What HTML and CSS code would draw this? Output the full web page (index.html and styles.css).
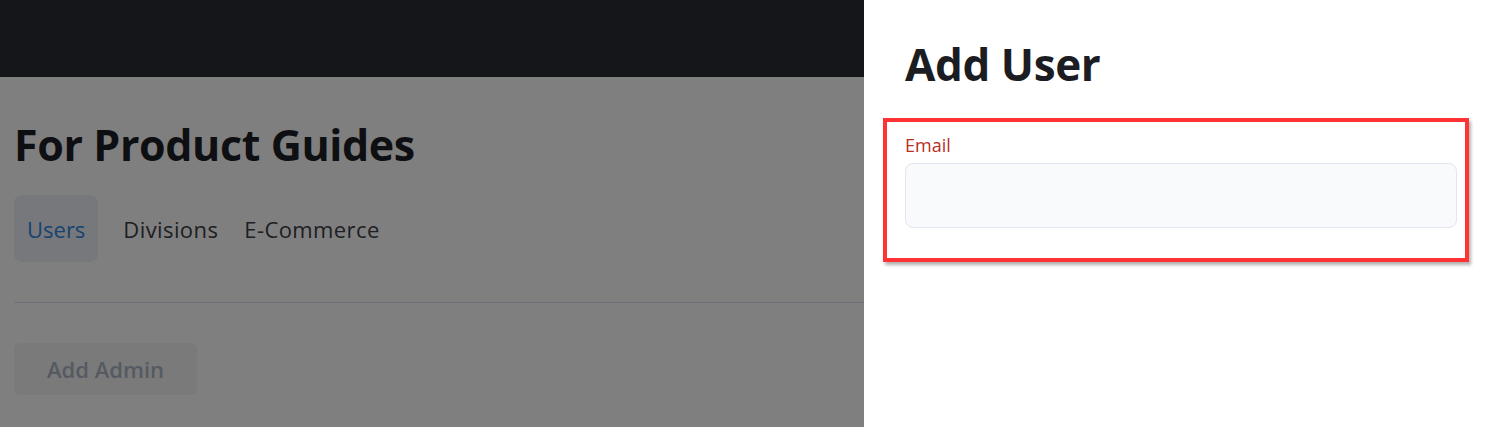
FILE: index.html
```html
<!DOCTYPE html>
<html lang="en">
<head>
<meta charset="utf-8">
<title>Add User</title>
<link rel="stylesheet" href="styles.css">
</head>
<body>
<div class="app">
  <header class="topbar"></header>
  <main class="content">
    <h1 class="page-title">For Product Guides</h1>
    <nav class="tabs">
      <a class="tab tab-active">Users</a>
      <a class="tab">Divisions</a>
      <a class="tab">E-Commerce</a>
    </nav>
    <div class="actions">
      <button class="btn-disabled" disabled>Add Admin</button>
    </div>
  </main>
</div>
<div class="backdrop"></div>
<aside class="drawer">
  <h2 class="drawer-title">Add User</h2>
  <div class="highlight">
    <label class="field-label" for="email">Email</label>
    <input class="field-input" id="email" type="email">
  </div>
</aside>
</body>
</html>
```
FILE: styles.css
```css
* { box-sizing: border-box; }
html, body {
  margin: 0;
  height: 100%;
  overflow: hidden;
  background: #ffffff;
  font-family: "Open Sans", "Noto Sans", "Liberation Sans", sans-serif;
}
.app { min-height: 100%; }
.topbar {
  height: 77px;
  background: #2a2c34;
}
.content {
  padding: 0 0 0 14px;
}
.page-title {
  margin: 0;
  padding-top: 40px;
  font-size: 43px;
  line-height: 56px;
  font-weight: 700;
  color: #1c1e24;
  letter-spacing: -0.4px;
}
.tabs {
  display: flex;
  align-items: center;
  gap: 0;
  margin-top: 22px;
  padding-bottom: 40px;
  border-bottom: 1px solid #dde0ee;
}
.tab {
  display: flex;
  align-items: center;
  height: 67px;
  padding: 0 13px;
  border-radius: 8px;
  font-size: 22px;
  letter-spacing: 0.4px;
  color: #3c3e46;
}
.tab-active {
  background: #eef1f7;
  color: #2e86e0;
  letter-spacing: 0;
  margin-right: 12px;
}
.actions { padding-top: 40px; }
.btn-disabled {
  width: 183px;
  height: 52px;
  border: none;
  border-radius: 6px;
  background: #f4f4f4;
  color: #aab4c4;
  font-family: inherit;
  font-size: 22px;
  font-weight: 600;
}
.backdrop {
  position: fixed;
  inset: 0;
  background: rgba(0, 0, 0, 0.5);
}
.drawer {
  position: fixed;
  top: 0;
  right: 0;
  bottom: 0;
  width: 623px;
  background: #ffffff;
  padding: 0 18px 0 19px;
}
.drawer-title {
  margin: 0;
  padding: 36px 0 0 22px;
  font-size: 44px;
  line-height: 56px;
  font-weight: 700;
  color: #1c1d22;
  letter-spacing: -0.4px;
}
.highlight {
  margin-top: 26px;
  border: 4px solid #ff3333;
  box-shadow: 2px 3px 3px rgba(0, 0, 0, 0.3);
  padding: 10px 8px 30px 18px;
}
.field-label {
  display: block;
  font-size: 18px;
  line-height: 26px;
  font-weight: 500;
  color: #b8301e;
  margin-bottom: 5px;
}
.field-input {
  display: block;
  width: 100%;
  height: 65px;
  background: #f9fafc;
  border: 1.5px solid #e3e5f0;
  border-radius: 8px;
  outline: none;
}
```
